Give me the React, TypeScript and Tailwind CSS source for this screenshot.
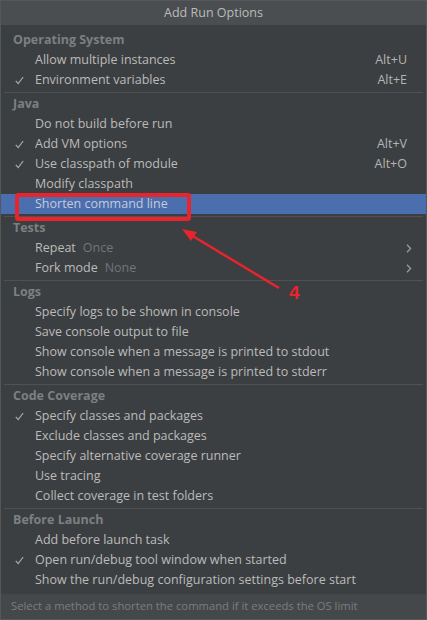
import React from "react";

type Item = { label: string; check?: boolean; shortcut?: string; sub?: string; arrow?: boolean; selected?: boolean };
type Section = { title: string; items: Item[] };

const sections: Section[] = [
  {
    title: "Operating System",
    items: [
      { label: "Allow multiple instances", shortcut: "Alt+U" },
      { label: "Environment variables", check: true, shortcut: "Alt+E" },
    ],
  },
  {
    title: "Java",
    items: [
      { label: "Do not build before run" },
      { label: "Add VM options", check: true, shortcut: "Alt+V" },
      { label: "Use classpath of module", check: true, shortcut: "Alt+O" },
      { label: "Modify classpath" },
      { label: "Shorten command line", selected: true },
    ],
  },
  {
    title: "Tests",
    items: [
      { label: "Repeat", sub: "Once", arrow: true },
      { label: "Fork mode", sub: "None", arrow: true },
    ],
  },
  {
    title: "Logs",
    items: [
      { label: "Specify logs to be shown in console" },
      { label: "Save console output to file" },
      { label: "Show console when a message is printed to stdout" },
      { label: "Show console when a message is printed to stderr" },
    ],
  },
  {
    title: "Code Coverage",
    items: [
      { label: "Specify classes and packages", check: true },
      { label: "Exclude classes and packages" },
      { label: "Specify alternative coverage runner" },
      { label: "Use tracing" },
      { label: "Collect coverage in test folders" },
    ],
  },
  {
    title: "Before Launch",
    items: [
      { label: "Add before launch task" },
      { label: "Open run/debug tool window when started", check: true },
      { label: "Show the run/debug configuration settings before start" },
    ],
  },
];

function Check() {
  return (
    <svg width="9" height="9" viewBox="0 0 9 9" className="block">
      <polyline points="0.8,4.8 3.2,7.6 8.2,1" fill="none" stroke="#a9a9a9" strokeWidth="1.2" />
    </svg>
  );
}

function Chevron() {
  return (
    <svg width="6" height="9" viewBox="0 0 6 9" className="block">
      <polyline points="1,0.8 4.6,4.5 1,8.2" fill="none" stroke="#9a9a9a" strokeWidth="1.3" />
    </svg>
  );
}

export default function App() {
  return (
    <div
      className="relative w-[427px] h-[620px] bg-[#3c3f41] border border-[#555759] flex flex-col overflow-hidden text-[#bbbbbb] text-[12.5px]"
      style={{ fontFamily: '"Segoe UI", "Open Sans", "Noto Sans", sans-serif' }}
    >
      <div className="h-[24px] shrink-0 bg-[#4b4e51] flex items-center justify-center text-[12.5px] text-[#bbbbbb]">
        Add Run Options
      </div>
      <div className="flex-1 flex flex-col pt-[5px]">
        {sections.map((s, si) => (
          <div key={s.title} className="flex flex-col">
            {si > 0 && (
              <div className="h-[4px] flex items-center px-[3px]">
                <div className="h-px w-full bg-[#515151]" />
              </div>
            )}
            <div className="h-[20px] flex items-center pl-[12px] font-bold text-[#7d7f80]">{s.title}</div>
            {s.items.map((it) => (
              <div
                key={it.label}
                className={`h-[20px] flex items-center pr-[19px] ${it.selected ? "bg-[#4b6eaf] text-[#c4cbd6]" : ""}`}
              >
                <div className="w-[34px] shrink-0 flex justify-end pr-[11px]">{it.check && <Check />}</div>
                <span className="whitespace-nowrap">{it.label}</span>
                {it.sub && <span className="ml-[7px] text-[#737577]">{it.sub}</span>}
                <div className="flex-1" />
                {it.shortcut && <span className="text-[#b4b4b4]">{it.shortcut}</span>}
                {it.arrow && (
                  <span className="-mr-[5px]">
                    <Chevron />
                  </span>
                )}
              </div>
            ))}
          </div>
        ))}
      </div>
      <div className="h-[25px] shrink-0 bg-[#45484a] flex items-center pl-[10px] text-[#7b7d7f] text-[11.25px]">
        Select a method to shorten the command if it exceeds the OS limit
      </div>

      {/* annotation overlay */}
      <div className="absolute left-[14px] top-[192px] w-[176px] h-[28px] border-[4px] border-[#e8242c] rounded-[3px]" />
      <svg className="absolute left-0 top-0" width="427" height="620" viewBox="0 0 427 620">
        <line x1="278" y1="287" x2="190" y2="234" stroke="#e8242c" strokeWidth="2.5" />
        <polygon points="181,228 196,231 190,240" fill="#e8242c" />
      </svg>
      <div
        className="absolute left-[288px] top-[282px] text-[#e8242c] text-[19px] font-bold leading-none"
        style={{ fontFamily: '"Liberation Sans", Arial, sans-serif' }}
      >
        4
      </div>
    </div>
  );
}
